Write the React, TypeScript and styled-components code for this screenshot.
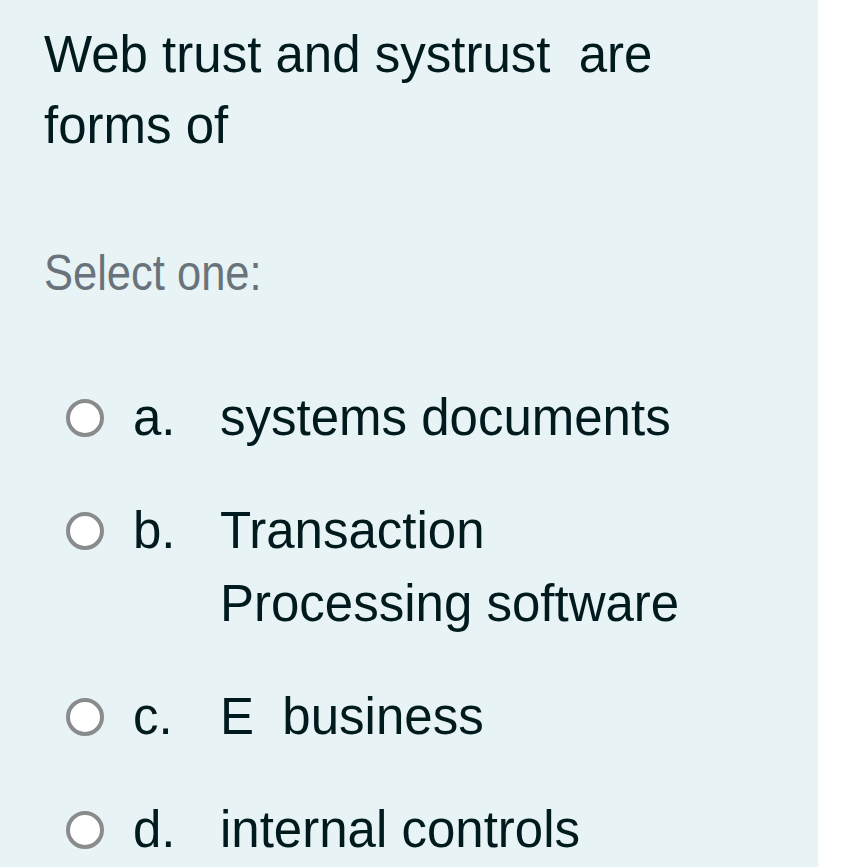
import styled, { createGlobalStyle } from 'styled-components';

// Вопрос с одним вариантом ответа (светло-бирюзовая карточка, радиокнопки слева)

const GlobalStyle = createGlobalStyle`
  html, body {
    margin: 0;
    padding: 0;
    background: #ffffff;
    overflow: hidden;
  }
  body {
    font-family: 'Liberation Sans', Arial, Helvetica, sans-serif;
  }
`;

const Panel = styled.div`
  width: 818px;
  height: 867px;
  box-sizing: border-box;
  background: #e7f3f5;
  padding: 19px 98px 0 44px;
  color: #001a1e;
`;

const QText = styled.div`
  font-size: 51px;
  line-height: 71px;
  white-space: pre-wrap;
`;

const Prompt = styled.div`
  margin-top: 77px;
  font-size: 50px;
  line-height: 71px;
  color: #6a737b;
  white-space: nowrap;

  span {
    display: inline-block;
    transform: scaleX(0.87);
    transform-origin: left center;
  }
`;

const Answers = styled.div`
  margin-top: 72px;
  display: flex;
  flex-direction: column;
  gap: 40px;
`;

const Option = styled.label`
  display: flex;
  align-items: flex-start;
  padding-left: 22px;
  font-size: 51px;
  line-height: 73px;
`;

const Radio = styled.span`
  flex: none;
  width: 38px;
  height: 38px;
  box-sizing: border-box;
  margin-top: 18px;
  border-radius: 50%;
  border: 4px solid #8a8b8d;
  background: #ffffff;
`;

const Letter = styled.span`
  flex: none;
  width: 87px;
  margin-left: 29px;
`;

const OptionText = styled.span`
  flex: 1;
  white-space: pre-wrap;
`;

const options = [
  { letter: 'a.', text: 'systems documents' },
  { letter: 'b.', text: 'Transaction Processing software' },
  { letter: 'c.', text: 'E  business' },
  { letter: 'd.', text: 'internal controls' },
];

export default function App() {
  return (
    <>
      <GlobalStyle />
      <Panel>
        <QText>{'Web trust and systrust  are forms of'}</QText>
        <Prompt>
          <span>Select one:</span>
        </Prompt>
        <Answers>
          {options.map((o) => (
            <Option key={o.letter}>
              <Radio />
              <Letter>{o.letter}</Letter>
              <OptionText>{o.text}</OptionText>
            </Option>
          ))}
        </Answers>
      </Panel>
    </>
  );
}
